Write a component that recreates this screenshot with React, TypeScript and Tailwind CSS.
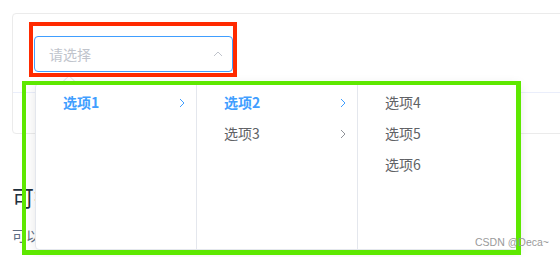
import React from "react"

const Chevron = ({ active }: { active: boolean }) => (
  <svg width="6" height="10" viewBox="0 0 6 10" fill="none">
    <polyline points="1,1 5,5 1,9" stroke={active ? "#409eff" : "#909399"} strokeWidth="1" />
  </svg>
)

type Item = { label: string; active?: boolean; children?: boolean }

const columns: Item[][] = [
  [{ label: "选项1", active: true, children: true }],
  [
    { label: "选项2", active: true, children: true },
    { label: "选项3", children: true },
  ],
  [{ label: "选项4" }, { label: "选项5" }, { label: "选项6" }],
]

export default function App() {
  return (
    <div className="relative w-[560px] h-[257px] overflow-hidden bg-white font-['Noto_Sans_CJK_SC','Microsoft_YaHei',sans-serif]">
      <div className="pl-3 pt-[13px]">
        {/* demo block */}
        <div className="w-[600px] border border-[#ebebeb] rounded-[4px]">
          <div className="pt-[22px] pb-[20px] pl-[21px]">
            <div className="w-[199px] h-[36px] border border-[#409eff] rounded-[4px] flex items-center justify-between pl-[14px] pr-[9px]">
              <span className="text-[14px] text-[#c0c4cc]">请选择</span>
              <svg width="10" height="6" viewBox="0 0 10 6" fill="none">
                <polyline points="1,5 5,1 9,5" stroke="#c0c4cc" strokeWidth="1" />
              </svg>
            </div>
          </div>
          <div className="border-t border-[#eaeefb] h-[41px]" />
        </div>

        <h3 className="mt-[46px] text-[22px] leading-[33px] text-[#1f2f3d]">可搜索</h3>
        <p className="mt-[12px] text-[14px] leading-[21px] text-[#5e6d82]">可以快捷地搜索选项并选择。</p>
      </div>

      {/* cascader dropdown */}
      <div className="absolute left-[64px] top-[77px] w-[10px] h-[10px] rotate-45 bg-white border-l border-t border-[#e4e7ed]" />
      <div className="absolute left-[35px] top-[83px] h-[167px] flex bg-white border border-[#e4e7ed] rounded-[4px] shadow-[0_2px_12px_0_rgba(0,0,0,0.1)]">
        {columns.map((col, i) => (
          <div key={i} className="w-[161px] border-r border-[#e4e7ed] py-[3px]">
            {col.map((item) => (
              <div key={item.label} className="h-[31px] flex items-center justify-between pl-[27px] pr-[11px]">
                <span
                  className={`text-[14px] ${item.active ? "text-[#409eff] font-bold" : "text-[#606266]"}`}
                >
                  {item.label}
                </span>
                {item.children && <Chevron active={!!item.active} />}
              </div>
            ))}
          </div>
        ))}
      </div>

      {/* annotation boxes */}
      <div className="absolute left-[29px] top-[22px] w-[208px] h-[55px] border-4 border-[#ff2a00]" />
      <div className="absolute left-[22px] top-[81px] w-[499px] h-[174px] border-4 border-r-[5px] border-b-[5px] border-[#5ee800]" />

      <div className="absolute left-[475px] top-[235px] text-[10.5px] leading-[14px] text-[#9a9a9a] font-['Liberation_Sans',sans-serif]">
        CSDN @Deca~
      </div>
    </div>
  )
}
